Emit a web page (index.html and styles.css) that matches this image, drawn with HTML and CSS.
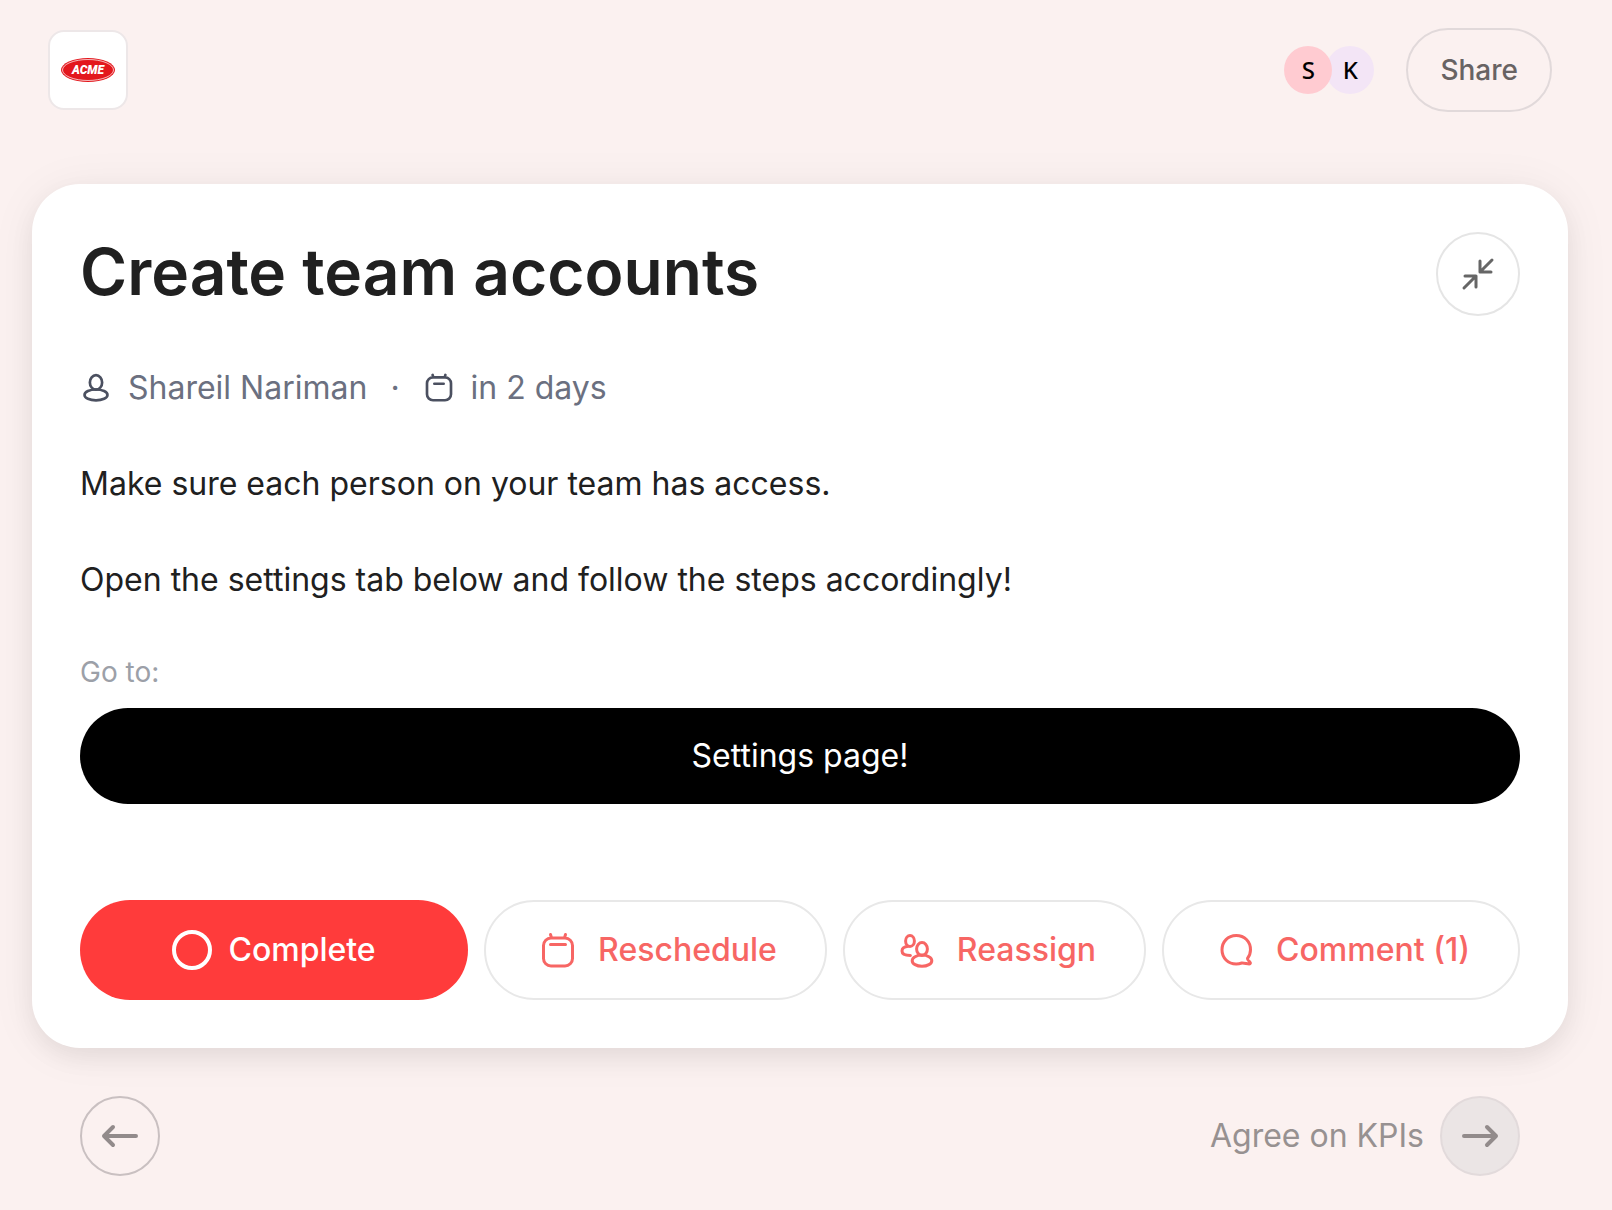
FILE: index.html
```html
<!DOCTYPE html>
<html lang="en">
<head>
  <meta charset="UTF-8" />
  <meta name="viewport" content="width=device-width, initial-scale=1.0" />
  <title>Create team accounts</title>
  <link rel="stylesheet" href="styles.css">
</head>
<body>
  <header class="topbar">
    <a href="#" class="logo" aria-label="Acme">
      <svg viewBox="0 0 54 24" width="54" height="24">
        <ellipse cx="27" cy="12" rx="27" ry="12" fill="#e3171d" />
        <ellipse cx="27" cy="12" rx="25.5" ry="10.5" fill="none" stroke="#fff" stroke-width="0.7" />
        <text x="27" y="16" text-anchor="middle" class="logo-text">ACME</text>
      </svg>
    </a>
    <div class="topbar-right">
      <div class="avatars">
        <span class="avatar avatar-pink">S</span>
        <span class="avatar avatar-purple">K</span>
      </div>
      <button type="button" class="share">Share</button>
    </div>
  </header>

  <main class="card">
    <div class="card-head">
      <h1>Create team accounts</h1>
      <button type="button" class="collapse" aria-label="Collapse">
        <svg viewBox="0 0 36 36" width="36" height="36" class="icon collapse-icon">
          <path d="M32 4 20 16M20 5v11h11M4 32l12-12M5 20h11v11" />
        </svg>
      </button>
    </div>

    <div class="meta">
      <span class="meta-item">
        <svg viewBox="0 0 24 24" width="32" height="32" class="icon">
          <ellipse cx="12" cy="7.8" rx="4.6" ry="5.4" />
          <ellipse cx="12" cy="17.2" rx="8.6" ry="4.1" />
        </svg>
        Shareil Nariman
      </span>
      <span>·</span>
      <span class="meta-item">
        <svg viewBox="0 0 24 24" width="32" height="32" class="icon">
          <path d="M7.5 4h9A4.5 4.5 0 0 1 21 8.5v8.2a4.5 4.5 0 0 1-4.5 4.5h-9A4.5 4.5 0 0 1 3 16.7V8.5A4.5 4.5 0 0 1 7.5 4ZM7.7 4 7.2 2.2M16.3 4l.5-1.8M8.5 8.8h7" />
        </svg>
        in 2 days
      </span>
    </div>

    <p>Make sure each person on your team has access.</p>
    <p>Open the settings tab below and follow the steps accordingly!</p>

    <div class="goto">Go to:</div>
    <a href="#" class="settings">Settings page!</a>

    <div class="actions">
      <button type="button" class="complete">
        <svg viewBox="0 0 40 40" width="40" height="40"><circle cx="20" cy="20" r="18" fill="none" stroke="#fff" stroke-width="4" /></svg>
        Complete
      </button>
      <button type="button" class="action">
        <svg viewBox="0 0 48 48" width="48" height="48" class="icon action-icon">
          <path d="M17 12h14a7.5 7.5 0 0 1 7.5 7.5v13A7.5 7.5 0 0 1 31 40H17a7.5 7.5 0 0 1-7.5-7.5v-13A7.5 7.5 0 0 1 17 12ZM17.5 12l-1-3.5M30.5 12l1-3.5M16.5 18.5h15" />
        </svg>
        Reschedule
      </button>
      <button type="button" class="action">
        <svg viewBox="0 0 48 48" width="48" height="48" class="icon action-icon">
          <ellipse cx="29" cy="23" rx="5.4" ry="6.4" />
          <ellipse cx="29" cy="34.7" rx="9.8" ry="5.6" />
          <ellipse cx="17" cy="15" rx="4.4" ry="5.4" />
          <path d="M15 20.2c-3.500.4-6 2.200-6 4.800 0 2.800 3.200 4.400 8.400 4.500" />
        </svg>
        Reassign
      </button>
      <button type="button" class="action">
        <svg viewBox="0 0 48 48" width="48" height="48" class="icon action-icon">
          <path d="M35.5 32.5C37.5 29.9 38.5 27 38.5 23.8 38.5 15.4 32.5 9.5 24.2 9.5S10 15.6 10 23.8 16 38 24.2 38c2 0 4-.4 5.6-1 2.7-.2 5 .9 7.4.9 1.3 0 1.6-1 .7-1.9-1.2-1.1-2.6-1.8-2.4-3.5Z" />
        </svg>
        Comment (1)
      </button>
    </div>
  </main>

  <nav class="pager">
    <a href="#" class="round prev" aria-label="Previous step">
      <svg viewBox="0 0 40 40" width="40" height="40" class="icon arrow">
        <path d="M36 20H4M13 11l-9 9 9 9" />
      </svg>
    </a>
    <a href="#" class="next">
      Agree on KPIs
      <span class="round next-circle">
        <svg viewBox="0 0 40 40" width="40" height="40" class="icon arrow">
          <path d="M4 20h32M27 11l9 9-9 9" />
        </svg>
      </span>
    </a>
  </nav>
</body>
</html>
```
FILE: styles.css
```css
* {
  box-sizing: border-box;
}

body {
  margin: 0;
  background-color: #fbf1f0;
  color: #202020;
  font-family: "Inter", "Liberation Sans", sans-serif;
  font-size: 32px;
  line-height: 48px;
}

a {
  color: inherit;
  text-decoration: none;
}

button {
  font: inherit;
  cursor: pointer;
}

svg {
  display: block;
  flex: none;
}

.icon {
  fill: none;
  stroke: #4b5060;
  stroke-width: 2;
  stroke-linecap: round;
  stroke-linejoin: round;
}

.topbar,
.topbar-right,
.avatars,
.meta,
.meta-item,
.actions,
.pager,
.next {
  display: flex;
  align-items: center;
}

.topbar {
  justify-content: space-between;
  padding: 28px 60px 72px 48px;
}

.logo {
  width: 80px;
  height: 80px;
  display: flex;
  align-items: center;
  justify-content: center;
  background: #fff;
  border: 2px solid #ede7e8;
  border-radius: 16px;
}

.logo-text {
  fill: #fff;
  font: italic 900 12px "Roboto", sans-serif;
}

.topbar-right {
  gap: 32px;
}

.avatar {
  width: 48px;
  height: 48px;
  border-radius: 50%;
  color: #000;
  font-family: "Noto Sans", sans-serif;
  font-size: 24px;
  font-weight: 500;
  text-align: center;
}

.avatar-pink {
  background: #ffcbd1;
  z-index: 1;
}

.avatar-purple {
  margin-left: -6px;
  background: #f3e5f6;
}

.share {
  height: 84px;
  padding: 0 32px;
  background: none;
  border: 2px solid #e1d9da;
  border-radius: 42px;
  color: #686363;
  font-size: 28px;
  font-weight: 500;
}

.card {
  margin: 0 44px 48px 32px;
  padding: 48px;
  background: #fff;
  border-radius: 48px;
  box-shadow: 0 4px 48px rgba(0, 0, 0, 0.06), 0 10px 24px rgba(0, 0, 0, 0.06);
}

.card-head {
  display: flex;
  justify-content: space-between;
}

h1 {
  margin: 0;
  font-size: 64px;
  font-weight: 600;
  line-height: 80px;
}

.collapse {
  width: 84px;
  height: 84px;
  display: flex;
  align-items: center;
  justify-content: center;
  padding: 0;
  background: #fff;
  border: 2px solid #e5e5e5;
  border-radius: 50%;
}

.collapse-icon {
  stroke: #666;
  stroke-width: 3;
}

.meta {
  gap: 23px;
  margin-top: 48px;
  color: #6b7080;
}

.meta-item {
  gap: 16px;
}

p {
  margin: 48px 0 0;
}

.goto {
  margin: 48px 0 16px;
  color: #9ca0a8;
  font-size: 28px;
  line-height: 40px;
}

.settings {
  display: block;
  padding: 24px;
  background: #000;
  border-radius: 48px;
  color: #fff;
  text-align: center;
}

.actions {
  gap: 16px;
  margin-top: 96px;
}

.complete,
.action {
  height: 100px;
  display: flex;
  align-items: center;
  justify-content: center;
  gap: 16px;
  padding: 0 48px;
  border-radius: 50px;
  font-weight: 500;
}

.complete {
  flex: 1;
  background: #ff3b3b;
  border: none;
  color: #fff;
}

.action {
  background: #fff;
  border: 2px solid #e8e8e8;
  color: #f76664;
}

.action-icon {
  stroke: #f76664;
  stroke-width: 3;
}

.pager {
  justify-content: space-between;
  padding: 0 92px 32px 80px;
}

.round {
  width: 80px;
  height: 80px;
  display: flex;
  align-items: center;
  justify-content: center;
  border: 2px solid #c9c0c1;
  border-radius: 50%;
}

.next {
  gap: 16px;
  color: #979191;
}

.next-circle {
  background: #ebe5e5;
  border-color: #e2dadb;
}

.arrow {
  stroke: #928b8b;
  stroke-width: 4;
}
```
